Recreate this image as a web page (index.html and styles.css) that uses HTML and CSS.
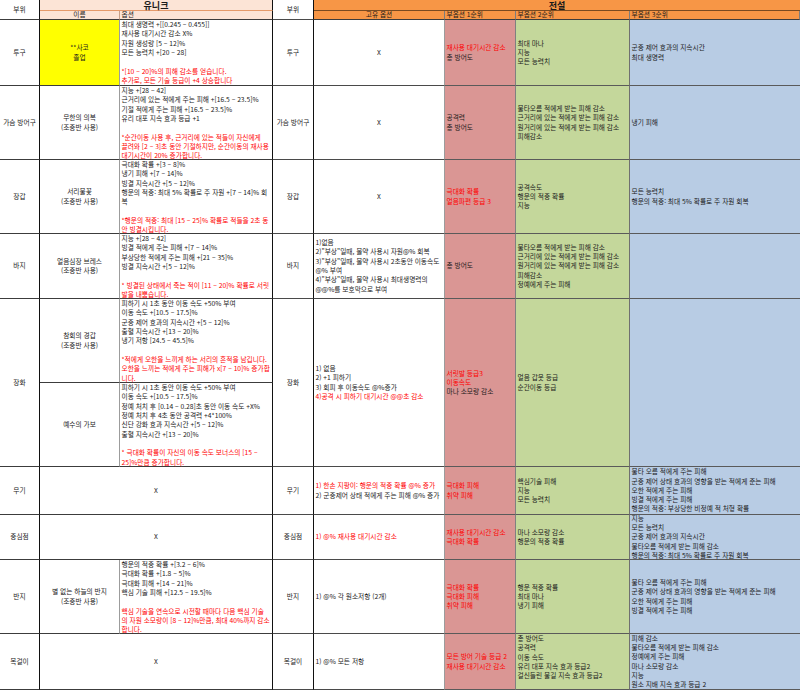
FILE: index.html
```html
<!DOCTYPE html>
<html lang="ko">
<head>
<meta charset="utf-8">
<title>유니크 / 전설 옵션</title>
<link rel="stylesheet" href="styles.css">
</head>
<body>
<div class="sheet">
  <!-- header row 1 -->
  <div class="c part hw rs2"><div>부위</div></div>
  <div class="c hu ctr cs2"><div>유니크</div></div>
  <div class="c part2 hw rs2"><div>부위</div></div>
  <div class="c hl ctr cs4"><div>전설</div></div>
  <!-- header row 2 -->
  <div class="c hus ctr"><div>이름</div></div>
  <div class="c hus kb"><div>옵션</div></div>
  <div class="c hls ctr"><div>고유 옵션</div></div>
  <div class="c hls"><div>부옵션 1순위</div></div>
  <div class="c hls"><div>부옵션 2순위</div></div>
  <div class="c hls"><div>부옵션 3순위</div></div>

  <!-- 투구 -->
  <div class="c part"><div>투구</div></div>
  <div class="c nm yel"><div>**사코<br>졸업</div></div>
  <div class="c opt"><div>최대 생명력 +[[0.245 – 0.455]]<br>재사용 대기시간 감소 X%<br>자원 생성량 [5 – 12]%<br>모든 능력치 +[20 – 28]<br><br><span class="r">*[10 – 20]%의 피해 감소를 얻습니다.<br>추가로, 모든 기술 등급이 +4 상승합니다</span></div></div>
  <div class="c part2"><div>투구</div></div>
  <div class="c uq ctr"><div>X</div></div>
  <div class="c p1"><div><span class="r">재사용 대기시간 감소</span><br>총 방어도</div></div>
  <div class="c p2"><div>최대 마나<br>지능<br>모든 능력치</div></div>
  <div class="c p3"><div>군중 제어 효과의 지속시간<br>최대 생명력</div></div>

  <!-- 가슴 방어구 -->
  <div class="c part"><div>가슴 방어구</div></div>
  <div class="c nm"><div>무한의 의복<br>(조중반 사용)</div></div>
  <div class="c opt"><div>지능 +[28 – 42]<br>근거리에 있는 적에게 주는 피해 +[16.5 – 23.5]%<br>기절 적에게 주는 피해 +[16.5 – 23.5]%<br>유리 대포 지속 효과 등급 +1<br><br><span class="r">*순간이동 사용 후, 근거리에 있는 적들이 자신에게<br>끌려와 [2 – 3]초 동안 기절하지만, 순간이동의 재사용<br>대기시간이 20% 증가합니다.</span></div></div>
  <div class="c part2"><div>가슴 방어구</div></div>
  <div class="c uq ctr"><div>X</div></div>
  <div class="c p1"><div>공격력<br>총 방어도</div></div>
  <div class="c p2"><div>불타오름 적에게 받는 피해 감소<br>근거리에 있는 적에게 받는 피해 감소<br>원거리에 있는 적에게 받는 피해 감소<br>피해감소</div></div>
  <div class="c p3"><div>냉기 피해</div></div>

  <!-- 장갑 -->
  <div class="c part"><div>장갑</div></div>
  <div class="c nm"><div>서리불꽃<br>(조중반 사용)</div></div>
  <div class="c opt"><div>극대화 확률 +[3 – 8]%<br>냉기 피해 +[7 – 14]%<br>빙결 지속시간 +[5 – 12]%<br>행운의 적중: 최대 5% 확률로 주 자원 +[7 – 14]% 회<br>복<br><br><span class="r">*행운의 적중: 최대 [15 – 25]% 확률로 적들을 2초 동<br>안 빙결시킵니다.</span></div></div>
  <div class="c part2"><div>장갑</div></div>
  <div class="c uq ctr"><div>X</div></div>
  <div class="c p1"><div><span class="r">극대화 확률<br>얼음파편 등급 3</span></div></div>
  <div class="c p2"><div>공격속도<br>행운의 적중 확률<br>지능</div></div>
  <div class="c p3"><div>모든 능력치<br>행운의 적중: 최대 5% 확률로 주 자원 회복</div></div>

  <!-- 바지 -->
  <div class="c part"><div>바지</div></div>
  <div class="c nm"><div>얼음심장 브레스<br>(조중반 사용)</div></div>
  <div class="c opt"><div>지능 +[28 – 42]<br>빙결 적에게 주는 피해 +[7 – 14]%<br>부상당한 적에게 주는 피해 +[21 – 35]%<br>빙결 지속시간 +[5 – 12]%<br><br><span class="r">* 빙결된 상태에서 죽는 적이 [11 – 20]% 확률로 서릿<br>발을 내뿜습니다.</span></div></div>
  <div class="c part2"><div>바지</div></div>
  <div class="c uq"><div>1)없음<br>2)"부상"일때, 물약 사용시 자원@% 회복<br>3)"부상"일때, 물약 사용시 2초동안 이동속도<br>@% 부여<br>4)"부상"일때, 물약 사용시 최대생명력의<br>@@%를 보호막으로 부여</div></div>
  <div class="c p1"><div>총 방어도</div></div>
  <div class="c p2"><div>불타오름 적에게 받는 피해 감소<br>근거리에 있는 적에게 받는 피해 감소<br>원거리에 있는 적에게 받는 피해 감소<br>피해감소<br>정예에게 주는 피해</div></div>
  <div class="c p3"><div></div></div>

  <!-- 장화 -->
  <div class="c part rs2"><div>장화</div></div>
  <div class="c nm"><div>참회의 경갑<br>(조중반 사용)</div></div>
  <div class="c opt"><div>피하기 시 1초 동안 이동 속도 +50% 부여<br>이동 속도 +[10.5 – 17.5]%<br>군중 제어 효과의 지속시간 +[5 – 12]%<br>출혈 지속시간 +[13 – 20]%<br>냉기 저항 [24.5 – 45.5]%<br><br><span class="r">*적에게 오한을 느끼게 하는 서리의 흔적을 남깁니다.<br>오한을 느끼는 적에게 주는 피해가 x[7 – 10]% 증가합<br>니다.</span></div></div>
  <div class="c part2 rs2"><div>장화</div></div>
  <div class="c uq rs2"><div>1) 없음<br>2) +1 피하기<br>3) 회피 후 이동속도 @%증가<br><span class="r">4)공격 시 피하기 대기시간 @@초 감소</span></div></div>
  <div class="c p1 rs2"><div><span class="r">서릿발 등급3<br>이동속도</span><br>마나 소모량 감소</div></div>
  <div class="c p2 rs2"><div>얼음 갑옷 등급<br>순간이동 등급</div></div>
  <div class="c p3 rs2"><div></div></div>
  <div class="c nm"><div>예수의 가보</div></div>
  <div class="c opt"><div>피하기 시 1초 동안 이동 속도 +50% 부여<br>이동 속도 +[10.5 – 17.5]%<br>정예 처치 후 [0.14 – 0.28]초 동안 이동 속도 +X%<br>정예 처치 후 4초 동안 공격력 +4*100%<br>신단 강화 효과 지속시간 +[5 – 12]%<br>출혈 지속시간 +[13 – 20]%<br><br><span class="r">* 극대화 확률이 자신의 이동 속도 보너스의 [15 –<br>25]%만큼 증가합니다.</span></div></div>

  <!-- 무기 -->
  <div class="c part"><div>무기</div></div>
  <div class="c nm kb cs2"><div>X</div></div>
  <div class="c part2"><div>무기</div></div>
  <div class="c uq"><div><span class="r">1) 한손 지팡이: 행운의 적중 확률 @% 증가</span><br>2) 군중제어 상태 적에게 주는 피해 @% 증가</div></div>
  <div class="c p1"><div><span class="r">극대화 피해<br>취약 피해</span></div></div>
  <div class="c p2"><div>핵심기술 피해<br>지능<br>모든 능력치</div></div>
  <div class="c p3"><div>불타 오름 적에게 주는 피해<br>군중 제어 상태 효과의 영향을 받는 적에게 준는 피해<br>오한 적에게 주는 피해<br>빙결 적에게 주는 피해<br>행운의 적중: 부상당한 비정예 적 처형 확률</div></div>

  <!-- 중심점 -->
  <div class="c part"><div>중심점</div></div>
  <div class="c nm kb cs2"><div>X</div></div>
  <div class="c part2"><div>중심점</div></div>
  <div class="c uq"><div><span class="r">1) @% 재사용 대기시간 감소</span></div></div>
  <div class="c p1"><div><span class="r">재사용 대기시간 감소<br>극대화 확률</span></div></div>
  <div class="c p2"><div>마나 소모량 감소<br>행운의 적중 확률</div></div>
  <div class="c p3"><div>지능<br>모든 능력치<br>군중 제어 효과의 지속시간<br>불타오름 적에게 받는 피해 감소<br>행운의 적중: 최대 5% 확률로 주 자원 회복</div></div>

  <!-- 반지 -->
  <div class="c part"><div>반지</div></div>
  <div class="c nm"><div>별 없는 하늘의 반지<br>(조중반 사용)</div></div>
  <div class="c opt"><div>행운의 적중 확률 +[3.2 – 6]%<br>극대화 확률 +[1.8 – 5]%<br>극대화 피해 +[14 – 21]%<br>핵심 기술 피해 +[12.5 – 19.5]%<br><br><span class="r">핵심 기술을 연속으로 시전할 때마다 다음 핵심 기술<br>의 자원 소모량이 [8 – 12]%만큼, 최대 40%까지 감소<br>합니다.</span></div></div>
  <div class="c part2"><div>반지</div></div>
  <div class="c uq"><div>1) @% 각 원소저항 (2개)</div></div>
  <div class="c p1"><div><span class="r">극대화 확률<br>극대화 피해<br>취약 피해</span></div></div>
  <div class="c p2"><div>행운 적중 확률<br>최대 마나<br>냉기 피해</div></div>
  <div class="c p3"><div>불타 오름 적에게 주는 피해<br>군중 제어 상태 효과의 영향을 받는 적에게 준는 피해<br>오한 적에게 주는 피해<br>빙결 적에게 주는 피해</div></div>

  <!-- 목걸이 -->
  <div class="c part"><div>목걸이</div></div>
  <div class="c nm kb cs2"><div>X</div></div>
  <div class="c part2"><div>목걸이</div></div>
  <div class="c uq"><div>1) @% 모든 저항</div></div>
  <div class="c p1"><div><span class="r">모든 방어 기술 등급 2<br>재사용 대기시간 감소</span></div></div>
  <div class="c p2 top"><div>총 방어도<br>공격력<br>이동 속도<br>유리 대포 지속 효과 등급2<br>걸신들린 불길 지속 효과 등급2</div></div>
  <div class="c p3"><div>피해 감소<br>불타오름 적에게 받는 피해 감소<br>정예에게 주는 피해<br>마나 소모량 감소<br>지능<br>원소 지배 지속 효과 등급 2</div></div>
</div>
</body>
</html>
```

FILE: styles.css
```css
html, body {
  margin: 0;
  padding: 0;
  background: #ffffff;
}

body {
  width: 800px;
  height: 691px;
  overflow: hidden;
  font-family: "Noto Sans CJK KR", "Noto Sans", sans-serif;
  font-size: 6.7px;
  line-height: 9.33px;
  color: #1a1a1a;
}

.sheet {
  display: grid;
  grid-template-columns: 40px 80px 153px 41px 131px 71px 114px 170px;
  grid-template-rows: 11px 9px 66px 74px 74px 65px 84px 84px 48px 45px 74px 56px;
  width: 800px;
}

.c {
  box-sizing: border-box;
  display: flex;
  align-items: center;
  min-width: 0;
  padding: 0 1.5px;
  white-space: nowrap;
  border-right: 1px solid #9c9c9c;
  border-bottom: 1px solid #3c3c3c;
  background: #ffffff;
}

.c > div {
  min-width: 0;
}

.rs2 { grid-row: span 2; }
.cs2 { grid-column: span 2; }
.cs4 { grid-column: span 4; }

.ctr {
  justify-content: center;
  text-align: center;
}

.top { align-items: flex-start; }

.kb { border-right-color: #111111; }

.r { color: #ff0000; }

/* headers */
.hw {
  background: #ffffff;
}

.hu {
  background: #fce4d6;
  font-size: 9px;
  font-weight: bold;
  line-height: 11px;
  border-bottom-color: #e59a6a;
  border-right-color: #111111;
}

.hus {
  background: #fce4d6;
  border-bottom-color: #3c3c3c;
  border-right-color: #c8a088;
}

.hus.kb { border-right-color: #111111; }

.hl {
  background: #f79646;
  font-size: 9px;
  font-weight: bold;
  line-height: 11px;
  border-bottom-color: #7a4a20;
  border-right: none;
}

.hls {
  background: #f79646;
  border-right-color: #7d7d7d;
}

/* body cells */
.part {
  justify-content: center;
  text-align: center;
  border-right-color: #111111;
}

.nm {
  justify-content: center;
  text-align: center;
}

.yel { background: #ffff00; }

.opt {
  align-items: flex-start;
  border-right-color: #111111;
}

.part2 {
  justify-content: center;
  text-align: center;
  border-right-color: #111111;
  border-bottom-color: #4a4a4a;
}

.uq { border-bottom-color: #4a4a4a; }

.p1 {
  background: #da9694;
  border-right-color: #808080;
  border-bottom-color: #5a5a5a;
}

.p2 {
  background: #c4d79b;
  border-right-color: #707070;
  border-bottom-color: #5a5a5a;
}

.p3 {
  background: #b8cce4;
  border-right: none;
  border-bottom-color: #5a5a5a;
}
```
